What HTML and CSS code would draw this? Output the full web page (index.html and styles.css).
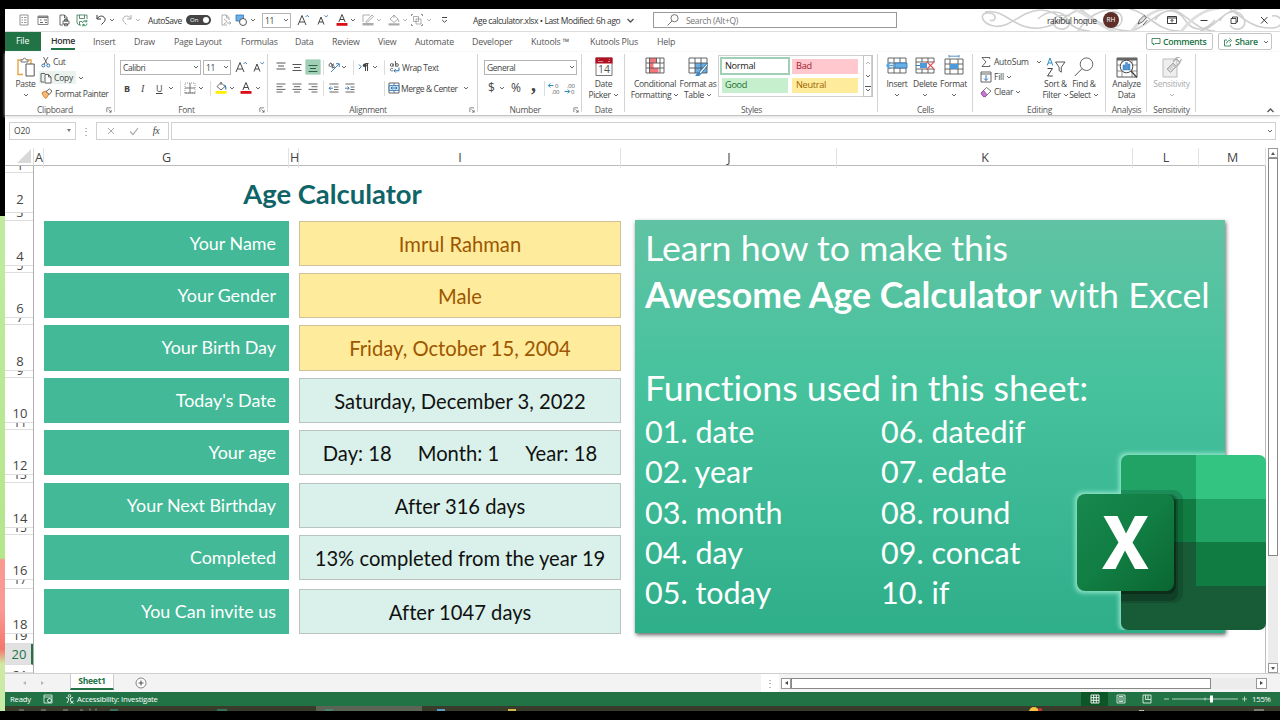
FILE: index.html
```html
<!DOCTYPE html>
<html lang="en">
<head>
<meta charset="utf-8">
<title>Age calculator.xlsx</title>
<link rel="stylesheet" href="styles.css">
</head>
<body>
<svg class="defs" width="0" height="0">
  <symbol id="chev" viewBox="0 0 6 6"><path d="M1 2l2 2 2-2" fill="none" stroke="currentColor" stroke-width=".9"/></symbol>
  <symbol id="form" viewBox="0 0 14 14"><path d="M3 2h8v10H3z" fill="#fff" stroke="#777" stroke-width=".8"/><path d="M4.500 4.500h1.500M4.500 7h1.500M4.500 9.500h1.500M7 4.500h2.500M7 7h2.500M7 9.500h2.500" stroke="#777" stroke-width=".8"/></symbol>
  <symbol id="cal" viewBox="0 0 14 14"><path d="M2 3h10v8.500H2z" fill="#fff" stroke="#666" stroke-width=".8"/><path d="M2 4.200h10" stroke="#666" stroke-width="1.400"/><path d="M4 7h1.500M8 7h3M4 9.500h3M9 9.500h2" stroke="#666"/></symbol>
  <symbol id="docprint" viewBox="0 0 14 14"><path d="M3 12V2h4.500l2.500 2.500V7M3 12h3M7.500 2v3h2.500" fill="none" stroke="#444" stroke-width=".8"/><path d="M6 8h6v3H6zM7.500 11h3v1.800h-3zM7.500 6.500h3V8h-3z" fill="#fff" stroke="#444" stroke-width=".8"/></symbol>
  <symbol id="save" viewBox="0 0 14 14"><path d="M2 2h10v4M2 2v8l2 2h2M4.500 2v3.500h5V2M4.500 12V8.500H7" fill="none" stroke="#4c8564" stroke-width=".9"/><path d="M7.500 10a2.300 2.300 0 0 1 4-1.500M12 10.500a2.300 2.300 0 0 1-4 1.500M11.800 6.800v2h-2M7.800 13.400v-2h2" fill="none" stroke="#2a8a50" stroke-width=".9"/></symbol>
  <symbol id="undo" viewBox="0 0 14 14"><path d="M3 2v4h4M3.200 5.600C5 3 8 2.200 10 4.200s1 4-.5 5.300L7.500 11.500" fill="none" stroke="currentColor"/></symbol>
  <symbol id="redo" viewBox="0 0 14 14"><path d="M11 2v4H7M10.800 5.600C9 3 6 2.200 4 4.200s-1 4 .5 5.300l2 2" fill="none" stroke="#aaa"/></symbol>
  <symbol id="pagearrow" viewBox="0 0 14 14"><path d="M3 12V2h4.500l2.500 2.500V7M3 12h5M7.500 2v3h2.500M5 6l3 2.500L5 11" fill="none" stroke="#999" stroke-width=".8"/><path d="M8 10h4M10.500 8.500L12 10l-1.500 1.500" fill="none" stroke="#999" stroke-width=".8"/></symbol>
  <symbol id="shapes" viewBox="0 0 14 14"><path d="M2 2h7.500v6H2z" fill="#6eb1ea" stroke="#2e75b6" stroke-width=".8"/><circle cx="9" cy="9" r="3.500" fill="#fff" stroke="#444" stroke-width=".9"/></symbol>
  <symbol id="grow" viewBox="0 0 14 14"><path d="M2 12L6 2.500 10 12M3.500 9h5" fill="none" stroke="#444"/><path d="M9.500 4l1.700-1.700L13 4" fill="none" stroke="#2e75b6" stroke-width=".9"/></symbol>
  <symbol id="shrink" viewBox="0 0 14 14"><path d="M3 11.500l3-7.500 3 7.500M4 9h4" fill="none" stroke="#444"/><path d="M9.500 2.300L11.200 4 13 2.300" fill="none" stroke="#2e75b6" stroke-width=".9"/></symbol>
  <symbol id="fcolor" viewBox="0 0 14 14"><path d="M3.800 9L7 1.500 10.200 9M5 6.500h4" fill="none" stroke="#444"/><path d="M1.500 10h11v2.800h-11z" fill="#d90f17"/></symbol>
  <symbol id="pengray" viewBox="0 0 14 14"><path d="M2 9V2h7M5 8.500L11 2l1.500 1.500L6.500 9H5z" fill="none" stroke="#999" stroke-width=".8"/><path d="M1.500 10h11v2.500h-11z" fill="#aaa"/></symbol>
  <symbol id="bucketgray" viewBox="0 0 14 14"><path d="M3 6l4-4 4 4-4 3.500zM7 2v3M11 6l1 3" fill="none" stroke="#999" stroke-width=".8"/><path d="M1.500 10.300h11v2.200h-11z" fill="#aaa"/></symbol>
  <symbol id="bucket" viewBox="0 0 14 14"><path d="M3 5.500l4-4 4 4-4 3.500zM7 1v3" fill="#fff" stroke="#444" stroke-width=".8"/><path d="M10.500 4c1.500 1 1.500 3 1.300 4.500" fill="none" stroke="#2e75b6" stroke-width="1.200"/><path d="M1.500 10h11v2.800h-11z" fill="#ffee00"/></symbol>
  <symbol id="groupi" viewBox="0 0 14 14"><path d="M3.500 3.500h5v5h-5zM6 6h5v5H6z" fill="none" stroke="#999" stroke-width=".8"/><path d="M1.500 3V1.500H3M11 1.500h1.500V3M12.500 11v1.500H11M3 12.500H1.500V11" fill="none" stroke="#888" stroke-width=".9"/></symbol>
  <symbol id="custom" viewBox="0 0 14 14"><path d="M5 4.500h5M5.200 7l2.300 2.300L9.800 7" fill="none" stroke="#444"/></symbol>
  <symbol id="mag" viewBox="0 0 14 14"><circle cx="8.500" cy="5.200" r="3.600" fill="none" stroke="#666" stroke-width=".9"/><path d="M6 8l-4.500 4.500" stroke="#666" stroke-width=".9"/></symbol>
  <symbol id="pen" viewBox="0 0 14 14"><path d="M3 11l1.500-4L9 2.500l2.500 2L7.500 9 3 11zM8 12l4.500-5" fill="none" stroke="#444" stroke-width=".8"/></symbol>
  <symbol id="ribbonopt" viewBox="0 0 14 14"><path d="M2.500 3.500h9v7h-9zM2.500 5h9" fill="none" stroke="#222" stroke-width=".9"/><path d="M7 9.500V6.500M5.500 8L7 6.500 8.500 8" fill="none" stroke="#222" stroke-width=".8"/></symbol>
  <symbol id="min" viewBox="0 0 14 14"><path d="M3.500 7.500h7" stroke="#222" stroke-width=".9"/></symbol>
  <symbol id="restore" viewBox="0 0 14 14"><path d="M4 5.500h5v5H4zM5.500 5.500V4H10.500v5H9" fill="none" stroke="#222" stroke-width=".8"/></symbol>
  <symbol id="close" viewBox="0 0 14 14"><path d="M4 4l6.500 6.500M10.500 4L4 10.500" stroke="#222" stroke-width=".9"/></symbol>
  <symbol id="comment" viewBox="0 0 10 10"><path d="M1 1.500h8v5H4L2.500 8V6.500H1z" fill="none" stroke="#217346" stroke-width=".8"/></symbol>
  <symbol id="share" viewBox="0 0 10 10"><path d="M4 3H1.500v6h6V7M3.500 6.500C4 4 5.500 3.500 7 3.500M6.500 1.500l2.200 2-2.200 2" fill="none" stroke="#217346" stroke-width=".8"/></symbol>
  <symbol id="paste" viewBox="0 0 20 20"><path d="M7 17.500H2V3h3M12 3h3v4" fill="none" stroke="#e7a443" stroke-width="1.400"/><path d="M5 5V2.800h2C7 .6 10 .6 10 2.800h2V5z" fill="#fff" stroke="#666" stroke-width=".9"/><path d="M10 7h8.200v12H10z" fill="#fff" stroke="#555"/></symbol>
  <symbol id="cut" viewBox="0 0 10 12"><path d="M2.500 1l4 7.500M7 1L3 8.500" stroke="#555" fill="none" stroke-width=".9"/><circle cx="2.300" cy="9.500" r="1.500" fill="none" stroke="#2e75b6"/><circle cx="7.300" cy="9.500" r="1.500" fill="none" stroke="#2e75b6"/></symbol>
  <symbol id="copy" viewBox="0 0 12 12"><path d="M4 10H1V1.500h4" fill="none" stroke="#555" stroke-width=".9"/><path d="M5 2.500h3.500L11 5v6H5zM8.500 2.500V5H11" fill="#fff" stroke="#555" stroke-width=".9"/></symbol>
  <symbol id="brush" viewBox="0 0 12 12"><path d="M1 4.500l4-1.500 3 3-3 4.500C3 9.500 1.500 7 1 4.500z" fill="#f6ba76" stroke="#d87720" stroke-width=".9"/><path d="M5 3.500l3.500-2.500L11 3 8.300 6.500z" fill="#fff" stroke="#555" stroke-width=".9"/></symbol>
  <symbol id="launch" viewBox="0 0 7 7"><path d="M1 6V1h5M3 3l3 3M6 3.500V6H3.500" fill="none" stroke="#555" stroke-width=".8"/></symbol>
  <symbol id="borders" viewBox="0 0 14 14"><path d="M2 2h10v10H2z" fill="none" stroke="#999" stroke-dasharray="1 1"/><path d="M7 2v10M2 7h10M1.500 12h11" stroke="#777"/></symbol>
  <symbol id="atop" viewBox="0 0 14 14"><path d="M2.500 3h9M4 6h6M2.500 9h9" stroke="#555"/></symbol>
  <symbol id="amid" viewBox="0 0 14 14"><path d="M2.500 4.500h9M4 7.500h6M2.500 10.500h9" stroke="#555"/></symbol>
  <symbol id="abot" viewBox="0 0 14 14"><path d="M4 8.500h6M2.500 11.500h9M2.500 5.500h9" stroke="#31604a"/></symbol>
  <symbol id="aleft" viewBox="0 0 14 14"><path d="M2.500 3h9M2.500 5.700h6M2.500 8.400h9M2.500 11h6" stroke="#555" stroke-width=".9"/></symbol>
  <symbol id="acen" viewBox="0 0 14 14"><path d="M2.500 3h9M4 5.700h6M2.500 8.400h9M4 11h6" stroke="#555" stroke-width=".9"/></symbol>
  <symbol id="aright" viewBox="0 0 14 14"><path d="M2.500 3h9M5.500 5.700h6M2.500 8.400h9M5.500 11h6" stroke="#555" stroke-width=".9"/></symbol>
  <symbol id="orient" viewBox="0 0 14 14"><path d="M4 12l8-8M9 3.700h3.300V7" fill="none" stroke="#2e75b6" stroke-width=".9"/><circle cx="3.500" cy="5" r="1.500" fill="none" stroke="#555" stroke-width=".9"/><path d="M3.500 2.500l3.500 4M6.500 3.500L5 8l3-1" fill="none" stroke="#555" stroke-width=".9"/></symbol>
  <symbol id="para" viewBox="0 0 14 14"><path d="M2 4.500l2.300 2.300L2 9" fill="none" stroke="#2e75b6"/><path d="M8.500 11V3.500h3M10.500 3.500V11" stroke="#444" fill="none"/><circle cx="7.800" cy="5.300" r="1.900" fill="#444"/></symbol>
  <symbol id="wrap" viewBox="0 0 12 12"><path d="M10 6.500v3.300H5M6.700 8L5 9.800l1.700 1.700" fill="none" stroke="#2e75b6"/><path d="M4.200 9.800H2.500a1 1 0 1 1 0-2.300h1.400" fill="none" stroke="#555" stroke-width=".8"/><circle cx="2.700" cy="4" r="1.400" fill="none" stroke="#555" stroke-width=".9"/><path d="M4.200 2.500v3M6.500 0v5.500" stroke="#555" stroke-width=".9"/><circle cx="8" cy="4" r="1.400" fill="none" stroke="#555" stroke-width=".9"/></symbol>
  <symbol id="merge" viewBox="0 0 12 12"><path d="M1 1h10v10H1z" fill="#fff" stroke="#555" stroke-width=".9"/><path d="M1 3.500h10v5H1z" fill="#bfe0f6" stroke="#2e75b6" stroke-width=".8"/><path d="M3 6h6M4.300 4.800L3 6l1.300 1.200M7.700 4.800L9 6 7.700 7.200M6 1v2.500M6 8.500V11" fill="none" stroke="#36638c" stroke-width=".8"/></symbol>
  <symbol id="outd" viewBox="0 0 14 14"><path d="M2.500 3h9M7 6h4.500M7 8.500h4.500M2.500 11h9" stroke="#555" stroke-width=".9"/><path d="M6 7.200H2M3.700 5.500L2 7.200l1.700 1.700" fill="none" stroke="#2e75b6" stroke-width=".9"/></symbol>
  <symbol id="ind" viewBox="0 0 14 14"><path d="M2.500 3h9M7.500 6h4M7.500 8.500h4M2.500 11h9" stroke="#555" stroke-width=".9"/><path d="M2 7.200h4M4.500 5.500l1.700 1.700-1.700 1.700" fill="none" stroke="#2e75b6" stroke-width=".9"/></symbol>
  <symbol id="incd" viewBox="0 0 14 14"><path d="M1.500 4.500h5M3.300 2.500l-2 2 2 2" fill="none" stroke="#2e8bc0"/><text x="8" y="6.500" class="tiny">0</text><text x="4.500" y="13" class="tiny">.00</text></symbol>
  <symbol id="decd" viewBox="0 0 14 14"><path d="M1.500 10.500h5M4.700 8.500l2 2-2 2" fill="none" stroke="#2e8bc0"/><text x="4" y="6.500" class="tiny">.00</text><text x="8" y="13" class="tiny">0</text></symbol>
  <symbol id="date" viewBox="0 0 18 20"><path d="M1 1h16v17.500H1z" fill="#fff" stroke="#777"/><path d="M.5.500h17v6H.5z" fill="#b01020"/><path d="M3 2.500h1M14 2.500h1M3 4.500h5M13 4.500h2" stroke="#fff" stroke-width=".5"/><text x="9" y="16" text-anchor="middle" class="day">14</text></symbol>
  <symbol id="condf" viewBox="0 0 20 18"><path d="M1 1h18v15H1z" fill="#fff"/><path d="M4.500 1h7v5h-7zM4.500 11h9v5h-9z" fill="#f2767c"/><path d="M4.500 6h4v5h-4z" fill="#f2767c"/><path d="M1 1h18v15H1zM1 6h18M1 11h18M4.500 1v15M15 1v15M11.500 1v5" fill="none" stroke="#555" stroke-width=".9"/></symbol>
  <symbol id="ftable" viewBox="0 0 20 19"><path d="M1 1h18v15H1z" fill="#fff"/><path d="M7 6h12v10H7z" fill="#67b0e6"/><path d="M1 1h18v15H1zM1 6h18M1 11h18M7 1v15M13 1v15" fill="none" stroke="#555" stroke-width=".9"/><path d="M19.500 6l-8 9-3 3.500c2 .5 4-.5 4.500-2l7-8.500z" fill="#fff" stroke="#376f9e" stroke-width=".9"/><path d="M11 14.500l-4 4c2.500.5 5 0 6-2z" fill="#3a87c8"/></symbol>
  <symbol id="ins" viewBox="0 0 22 18"><path d="M2 1h18v15H2zM2 6h18M2 11h18M8 1v15M14 1v15" fill="#fff" stroke="#555" stroke-width=".9"/><path d="M9 6h12v5H9z" fill="#67b0e6" stroke="#2e75b6" stroke-width=".8"/><path d="M10 8.500H1M4.500 5L1 8.500 4.500 12" fill="none" stroke="#58a5dd" stroke-width="1.600"/></symbol>
  <symbol id="del" viewBox="0 0 22 18"><path d="M2 1h18v4H2zM2 12h18v4H2zM8 1v4M14 1v4M8 12v4M14 12v4M2 5v7" fill="#fff" stroke="#555" stroke-width=".9"/><path d="M6 6h7v5H6z" fill="#4b9bdc"/><path d="M2 8.500h4" stroke="#2e75b6"/><path d="M12.500 4.500l8 8M20.500 4.500l-8 8" stroke="#e0565b" stroke-width="1.100"/></symbol>
  <symbol id="fmt" viewBox="0 0 22 21"><path d="M2 4h18v15H2zM2 9h18M2 14h18M7 4v15M15 4v15" fill="#fff" stroke="#555" stroke-width=".9"/><path d="M7 9h8v5H7z" fill="#4b9bdc"/><path d="M6 1.200h10M6 0v2.500M16 0v2.500" stroke="#2e75b6" stroke-width=".8"/></symbol>
  <symbol id="sum" viewBox="0 0 12 12"><path d="M9.800 3V1.500H2L6 6l-4 4.500h7.800V9" fill="none" stroke="#555" stroke-width=".9"/></symbol>
  <symbol id="filld" viewBox="0 0 12 12"><path d="M1 1h10v10H1zM1 3h10" fill="#fff" stroke="#555" stroke-width=".9"/><path d="M6 4.200V9.500M4 7.500l2 2 2-2" fill="none" stroke="#2e75b6"/></symbol>
  <symbol id="clear" viewBox="0 0 12 12"><path d="M1 7l5.500-5.500L11 5 5.500 10.500 3.500 10.500z" fill="#fff" stroke="#555" stroke-width=".8"/><path d="M1 7l2.500-2.500L7 8.800 5.300 10.700H3.500z" fill="#c778cf" stroke="#9a3ba8" stroke-width=".8"/></symbol>
  <symbol id="sort" viewBox="0 0 20 20"><path d="M1.200 8.500L4 1l2.800 7.500M2 6h4" fill="none" stroke="#2e8bc0"/><path d="M1.500 11.500h5L1.500 19h5.300" fill="none" stroke="#444"/><path d="M9.500 5h9.500l-3.700 5.200v5l-2.200-1.700v-3.300z" fill="none" stroke="#444" stroke-width=".9"/></symbol>
  <symbol id="find" viewBox="0 0 20 20"><circle cx="12.500" cy="7.200" r="6.300" fill="none" stroke="#555" stroke-width=".9"/><path d="M8 11.700L.8 19" stroke="#555"/></symbol>
  <symbol id="analyze" viewBox="0 0 22 22"><path d="M1 1h20v19H1z" fill="#fff" stroke="#444" stroke-width=".9"/><path d="M1 1h20v2.500H1z" fill="#666"/><path d="M1 8h20M1 14h20M6 3v17M16 3v17" stroke="#777" stroke-width=".8"/><circle cx="10.500" cy="9.500" r="6.300" fill="#fff" stroke="#444"/><path d="M15 14l6 6.500" stroke="#444" stroke-width="1.300"/><path d="M7 8h2v5H7zM9.500 5.500h2V13h-2zM12 7h2v6h-2z" fill="#4b9bdc" stroke="#2e75b6" stroke-width=".5"/></symbol>
  <symbol id="sens" viewBox="0 0 20 21"><path d="M1 2h14v18H1z" fill="#eee" stroke="#bbb"/><path d="M5 12l6-6 3.500 3.500-6 6z" fill="#ccc" stroke="#aaa"/><path d="M11 5l3-3.500 4 4L15 9M14 1l4-1M17.500 5.500L19.500 2" fill="none" stroke="#aaa" stroke-width="1.200"/><path d="M7 12l2 2M8.500 10.500l2 2M10 9l2 2" stroke="#fff" stroke-width=".7"/></symbol>
</svg>

<div class="screen">
  <div class="edge"></div>
  <div class="app">
    <header class="title">
      <svg class="swirl" viewBox="0 0 300 22"><g fill="none" stroke="#cfcfcf" stroke-width="1.600"><path d="M14 17C0 14-1 3 9 4s6 10 1 7M14 17C30 20 40 2 60 1s30 22 50 21M5 3c20-4 30 19 55 16S85 0 110 0M58 10c10-10 25-9 30 1s-10 12-14 5 6-12 16-9M98 22c10-16 25-22 40-22M100 0c14 10 28 22 50 22M124 12c0-12 18-12 18-2s-14 10-14 2M150 0c20 4 25 22 50 22M150 22c20-4 25-22 50-22M175 11c8-12 22-12 30 0s20 12 30 0M190 0c15 2 25 22 45 22M220 22c15-2 22-22 42-22M240 12c6-12 20-12 24-2s-10 14-14 6M250 0c12 8 22 19 40 19s12-14 2-12"/></g><path d="M200 24c12-16 24-24 40-25M150 24c12-16 24-24 40-25M90 -2c16 6 30 20 48 26" fill="none" stroke="#dedede" stroke-width="3"/></svg>
      <svg class="i"><use href="#form"/></svg><svg class="i"><use href="#cal"/></svg><svg class="i"><use href="#docprint"/></svg><svg class="i"><use href="#save"/></svg>
      <svg class="i"><use href="#undo"/></svg><svg class="c"><use href="#chev"/></svg><svg class="i"><use href="#redo"/></svg><svg class="c dim"><use href="#chev"/></svg>
      <span class="autosave">AutoSave</span><span class="toggle">On<i></i></span>
      <svg class="i"><use href="#pagearrow"/></svg><svg class="i"><use href="#shapes"/></svg><svg class="c"><use href="#chev"/></svg>
      <span class="combo size-top">11<svg class="c"><use href="#chev"/></svg></span>
      <svg class="i"><use href="#grow"/></svg><svg class="i"><use href="#shrink"/></svg><svg class="i"><use href="#fcolor"/></svg><svg class="c"><use href="#chev"/></svg>
      <svg class="i"><use href="#pengray"/></svg><svg class="c dim"><use href="#chev"/></svg><svg class="i"><use href="#bucketgray"/></svg><svg class="c dim"><use href="#chev"/></svg><svg class="i"><use href="#groupi"/></svg><svg class="c dim"><use href="#chev"/></svg><svg class="i"><use href="#custom"/></svg>
      <span class="docname">Age calculator.xlsx • Last Modified: 6h ago</span><svg class="c big"><use href="#chev"/></svg>
      <span class="search"><svg class="i"><use href="#mag"/></svg>Search (Alt+Q)</span>
      <span class="user">rakibul hoque</span><span class="avatar">RH</span>
      <svg class="i"><use href="#pen"/></svg><svg class="i"><use href="#ribbonopt"/></svg><svg class="i"><use href="#min"/></svg><svg class="i"><use href="#restore"/></svg><svg class="i"><use href="#close"/></svg>
    </header>

    <nav class="tabs">
      <b class="file">File</b><b class="on">Home</b><span>Insert</span><span>Draw</span><span>Page Layout</span><span>Formulas</span><span>Data</span><span>Review</span><span>View</span><span>Automate</span><span>Developer</span><span>Kutools ™</span><span>Kutools Plus</span><span>Help</span>
      <span class="btn comments"><svg><use href="#comment"/></svg>Comments</span>
      <span class="btn share"><svg><use href="#share"/></svg>Share<svg class="c"><use href="#chev"/></svg></span>
    </nav>

    <section class="ribbon">
      <div class="group launch">
        <div class="body clip">
          <div class="bigbtn paste"><svg width="20" height="20"><use href="#paste"/></svg><span>Paste</span><svg class="c"><use href="#chev"/></svg></div>
          <div class="stack16">
            <span><svg width="10" height="12"><use href="#cut"/></svg>Cut</span>
            <span class="copy"><i><svg width="12" height="12"><use href="#copy"/></svg>Copy</i><svg class="c"><use href="#chev"/></svg></span>
            <span><svg width="12" height="12"><use href="#brush"/></svg>Format Painter</span>
          </div>
        </div>
        <div class="name">Clipboard<svg><use href="#launch"/></svg></div>
      </div>
      <div class="group launch">
        <div class="body rowed">
          <div class="row font1"><span class="combo">Calibri<svg class="c"><use href="#chev"/></svg></span><span class="combo">11<svg class="c"><use href="#chev"/></svg></span><svg class="i"><use href="#grow"/></svg><svg class="i"><use href="#shrink"/></svg></div>
          <div class="row two font2"><b class="g">B</b><em class="g">I</em><u class="g">U</u><svg class="c"><use href="#chev"/></svg><s></s><svg class="i"><use href="#borders"/></svg><svg class="c"><use href="#chev"/></svg><s></s><svg class="i"><use href="#bucket"/></svg><svg class="c"><use href="#chev"/></svg><svg class="i"><use href="#fcolor"/></svg><svg class="c"><use href="#chev"/></svg></div>
        </div>
        <div class="name">Font<svg><use href="#launch"/></svg></div>
      </div>
      <div class="group launch">
        <div class="body rowed">
          <div class="row al1"><svg class="i"><use href="#atop"/></svg><svg class="i"><use href="#amid"/></svg><svg class="i sel"><use href="#abot"/></svg><s></s><svg class="i"><use href="#orient"/></svg><svg class="c"><use href="#chev"/></svg><s></s><svg class="i"><use href="#para"/></svg><svg class="c"><use href="#chev"/></svg><s></s><svg width="12" height="12"><use href="#wrap"/></svg><span>Wrap Text</span></div>
          <div class="row two al2"><svg class="i"><use href="#aleft"/></svg><svg class="i"><use href="#acen"/></svg><svg class="i"><use href="#aright"/></svg><s></s><svg class="i"><use href="#outd"/></svg><svg class="i"><use href="#ind"/></svg><s></s><svg width="12" height="12"><use href="#merge"/></svg><span>Merge &amp; Center</span><svg class="c"><use href="#chev"/></svg></div>
        </div>
        <div class="name">Alignment<svg><use href="#launch"/></svg></div>
      </div>
      <div class="group launch">
        <div class="body rowed">
          <div class="row num1"><span class="combo">General<svg class="c"><use href="#chev"/></svg></span></div>
          <div class="row two num2"><span class="sym">$</span><svg class="c"><use href="#chev"/></svg><span class="sym">%</span><span class="comma">,</span><s></s><svg class="i"><use href="#incd"/></svg><svg class="i"><use href="#decd"/></svg></div>
        </div>
        <div class="name">Number<svg><use href="#launch"/></svg></div>
      </div>
      <div class="group">
        <div class="body"><div class="bigbtn"><svg width="18" height="20"><use href="#date"/></svg><span>Date</span><span>Picker<svg class="c"><use href="#chev"/></svg></span></div></div>
        <div class="name">Date</div>
      </div>
      <div class="group">
        <div class="body styles">
          <div class="bigbtn"><svg width="20" height="18"><use href="#condf"/></svg><span>Conditional</span><span>Formatting<svg class="c"><use href="#chev"/></svg></span></div>
          <div class="bigbtn"><svg width="20" height="19"><use href="#ftable"/></svg><span>Format as</span><span>Table<svg class="c"><use href="#chev"/></svg></span></div>
          <div class="gallery">
            <span class="normal">Normal</span><span class="bad">Bad</span><span class="good">Good</span><span class="neutral">Neutral</span>
            <div class="spin"><svg class="c up dim"><use href="#chev"/></svg><svg class="c"><use href="#chev"/></svg><span class="more"><svg class="c"><use href="#chev"/></svg></span></div>
          </div>
        </div>
        <div class="name">Styles</div>
      </div>
      <div class="group">
        <div class="body cellsg">
          <div class="bigbtn"><svg width="22" height="18"><use href="#ins"/></svg><span>Insert</span><svg class="c"><use href="#chev"/></svg></div>
          <div class="bigbtn"><svg width="22" height="18"><use href="#del"/></svg><span>Delete</span><svg class="c"><use href="#chev"/></svg></div>
          <div class="bigbtn tall"><svg width="22" height="21"><use href="#fmt"/></svg><span>Format</span><svg class="c"><use href="#chev"/></svg></div>
        </div>
        <div class="name">Cells</div>
      </div>
      <div class="group">
        <div class="body edit">
          <div class="stack15">
            <span><svg width="12" height="12"><use href="#sum"/></svg>AutoSum<svg class="c far"><use href="#chev"/></svg></span>
            <span><svg width="12" height="12"><use href="#filld"/></svg>Fill<svg class="c"><use href="#chev"/></svg></span>
            <span><svg width="12" height="12"><use href="#clear"/></svg>Clear<svg class="c"><use href="#chev"/></svg></span>
          </div>
          <div class="bigbtn"><svg width="20" height="20"><use href="#sort"/></svg><span>Sort &amp;</span><span>Filter<svg class="c"><use href="#chev"/></svg></span></div>
          <div class="bigbtn"><svg width="20" height="20"><use href="#find"/></svg><span>Find &amp;</span><span>Select<svg class="c"><use href="#chev"/></svg></span></div>
        </div>
        <div class="name">Editing</div>
      </div>
      <div class="group">
        <div class="body"><div class="bigbtn"><svg width="22" height="22"><use href="#analyze"/></svg><span>Analyze</span><span>Data</span></div></div>
        <div class="name">Analysis</div>
      </div>
      <div class="group">
        <div class="body"><div class="bigbtn off"><svg width="20" height="21"><use href="#sens"/></svg><span>Sensitivity</span><svg class="c dim"><use href="#chev"/></svg></div></div>
        <div class="name">Sensitivity</div>
      </div>
      <div class="collapse"><svg class="c up big"><use href="#chev"/></svg></div>
    </section>

    <div class="formula">
      <span class="namebox">O20<i></i></span><span class="dots">⋮</span>
      <span class="fx"><svg width="10" height="10"><path d="M2 2l6 6M8 2L2 8" stroke="#aaa"/></svg><svg width="10" height="10"><path d="M1 5.500l3 3L9 2" fill="none" stroke="#aaa" stroke-width="1.200"/></svg><em>fx</em></span>
      <span class="input"><svg class="c"><use href="#chev"/></svg></span>
    </div>

    <main class="work">
      <div class="corner"><svg width="14" height="14"><path d="M14 0v14H0z" fill="#d9d9d9"/></svg></div>
      <div class="cols"><span>A</span><span>G</span><span>H</span><span>I</span><span>J</span><span>K</span><span>L</span><span>M</span></div>
      <div class="vscroll"><span class="sb"><i class="t-up"></i></span><span class="thumb"></span><span class="track"></span><span class="sb"><i class="t-down"></i></span></div>
      <div class="rows"><span class="odd">1</span><span class="r2">2</span><span class="odd">3</span><span>4</span><span class="odd">5</span><span>6</span><span class="odd">7</span><span>8</span><span class="odd">9</span><span>10</span><span class="odd">11</span><span>12</span><span class="odd">13</span><span>14</span><span class="odd">15</span><span>16</span><span class="odd">17</span><span>18</span><span class="odd r19">19</span><span class="cur">20</span><span class="last">21</span></div>
      <div class="sheet">
        <h1>Age Calculator</h1>
        <div class="k r4">Your Name</div><div class="v in r4">Imrul Rahman</div>
        <div class="k r6">Your Gender</div><div class="v in r6">Male</div>
        <div class="k r8">Your Birth Day</div><div class="v in r8">Friday, October 15, 2004</div>
        <div class="k r10">Today's Date</div><div class="v r10">Saturday, December 3, 2022</div>
        <div class="k r12">Your age</div><div class="v age r12"><span>Day: 18</span><span>Month: 1</span><span>Year: 18</span></div>
        <div class="k r14">Your Next Birthday</div><div class="v r14">After 316 days</div>
        <div class="k r16">Completed</div><div class="v r16">13% completed from the year 19</div>
        <div class="k r18">You Can invite us</div><div class="v r18">After 1047 days</div>

        <aside class="panel">
          <p>Learn how to make this</p>
          <p><b>Awesome Age Calculator</b> with Excel</p>
          <p class="gap">Functions used in this sheet:</p>
          <div class="lists">
            <ul><li>01. date</li><li>02. year</li><li>03. month</li><li>04. day</li><li>05. today</li></ul>
            <ul><li>06. datedif</li><li>07. edate</li><li>08. round</li><li>09. concat</li><li>10. if</li></ul>
          </div>
        </aside>
        <svg class="logo" viewBox="0 0 204 190">
          <defs>
            <linearGradient id="lg" x1="0" y1="0" x2="1" y2="1"><stop offset="0" stop-color="#18884f"/><stop offset=".5" stop-color="#117e43"/><stop offset="1" stop-color="#0b6631"/></linearGradient>
            <clipPath id="lc"><rect x="54" y="8" width="145" height="175" rx="7"/></clipPath>
            <clipPath id="pc"><rect x="0" y="0" width="158" height="183"/></clipPath>
            <filter id="gl" x="-20%" y="-20%" width="140%" height="140%"><feGaussianBlur stdDeviation="2.200"/></filter>
          </defs>
          <g clip-path="url(#pc)"><g filter="url(#gl)" fill="#8fe5c8"><rect x="52" y="6" width="140" height="178" rx="7"/><rect x="8" y="45" width="100" height="101" rx="8"/></g></g>
          <g clip-path="url(#lc)">
            <path d="M54 8h75v44H54z" fill="#21a366"/><path d="M129 8h70v44h-70z" fill="#33c481"/>
            <path d="M54 52h75v43H54z" fill="#107c41"/><path d="M129 52h70v43h-70z" fill="#21a366"/>
            <path d="M54 95h75v88H54z" fill="#185c37"/><path d="M129 95h70v44h-70z" fill="#107c41"/><path d="M129 139h70v44h-70z" fill="#185c37"/>
            <rect x="10" y="43" width="106" height="113" rx="9" fill="#000" opacity=".13"/>
            <rect x="10" y="47" width="101" height="107" rx="8" fill="#000" opacity=".18"/>
            <rect x="10" y="48" width="99" height="99" rx="8" fill="#000" opacity=".3"/>
          </g>
          <rect x="10" y="47" width="97" height="97" rx="8" fill="url(#lg)"/>
          <path d="M36.500 69h14l8.500 17.500L68 69h13L65.500 95.500 81.500 122H68L58 103.500 48.500 122H35l16.500-26.500z" fill="#fff"/>
        </svg>
      </div>
    </main>

    <div class="sheetbar">
      <i class="t-left"></i><i class="t-right"></i><b class="stab">Sheet1</b>
      <svg class="plus" width="12" height="12"><circle cx="6" cy="6" r="5" fill="#fff" stroke="#777" stroke-width=".9"/><path d="M3.500 6h5M6 3.500v5" stroke="#555" stroke-width="1.100"/></svg>
      <span class="grip">⋮</span>
      <div class="hscroll"><span class="sb"><i class="t-left dk"></i></span><span class="thumb"></span><span class="track"></span><span class="sb"><i class="t-right dk"></i></span></div>
    </div>

    <footer class="status">
      <span>Ready</span>
      <svg width="10" height="10"><path d="M1 1h8v8H1zM1 3h8" fill="none" stroke="#d5e8dc" stroke-width=".9"/><circle cx="6.500" cy="6.500" r="2" fill="none" stroke="#fff" stroke-width=".9"/></svg>
      <svg width="10" height="10"><circle cx="4.500" cy="1.800" r="1.200" fill="none" stroke="#fff" stroke-width=".8"/><path d="M1 3.500l2.500.8v2L2 9M8 3.500l-2.500.8v2l1 1.700M5.500 7l3 2.500M8.500 7l-3 2.500" fill="none" stroke="#fff" stroke-width=".9"/></svg>
      <span>Accessibility: Investigate</span>
      <span class="view on"><svg width="10" height="10"><path d="M1 1h8v8H1zM1 3.700h8M1 6.300h8M3.700 1v8M6.300 1v8" fill="none" stroke="#fff" stroke-width=".9"/></svg></span>
      <span class="view"><svg width="10" height="10"><path d="M1 1h8v8H1zM3 2.500h4v5H3zM4 4h2M4 6h2" fill="none" stroke="#dcebe2" stroke-width=".9"/></svg></span>
      <span class="view"><svg width="10" height="10"><path d="M1 1h8v8H1zM3.500 1v4.500H9M6 1v4.500" fill="none" stroke="#dcebe2" stroke-width=".9"/></svg></span>
      <svg class="zoomer" width="88" height="10"><path d="M2 5h5M80 5h5M82.500 2.500v5" stroke="#d5e8dc" stroke-width=".8"/><path d="M10 5h66M43 3.500v3" stroke="#d5e8dc" stroke-width=".8"/><path d="M48 1.500h3v7h-3z" fill="#fff"/></svg>
      <span>155%</span>
    </footer>
    <div class="taskbar"><svg width="1275" height="5"><path d="M311 0h106v5H311z" fill="#5c6455"/><path d="M14 4h5M36 4h5M58 4h5M75 4h3M85 2.500v2M91 2.500v2" stroke="#aaa" stroke-width=".8"/><path d="M105 4h8M212 4h10M320 4h8" stroke="#3fa58c"/><path d="M432 4h8" stroke="#5c9ac0" stroke-width="2"/><path d="M503 4h8" stroke="#d6b44c" stroke-width="2"/><circle cx="1029" cy="6" r="5" fill="#f3c53c"/><circle cx="1035" cy="4" r="2" fill="#c33"/><path d="M1134 4.500h5M1249 4h10" stroke="#ddd" stroke-width=".8"/></svg></div>
  </div>
</div>
</body>
</html>
```
FILE: styles.css
```css
* { box-sizing: border-box; }
body { margin: 0; background: #000; font-family: "Open Sans", "Noto Sans", sans-serif; font-size: 8.500px; letter-spacing: -.42px; color: #444; }
.defs { position: absolute; }
svg { display: block; flex: none; }
i { font-style: normal; }
.screen { width: 1280px; height: 720px; overflow: hidden; display: grid; grid-template-columns: 5px 1275px; padding-top: 9px; }
.edge { height: 702px; background: linear-gradient(#000 207px, #c0eb9f 207px, #b4e68c 549px, #f99a90 551px, #fb9a96 600px, #f5766c 640px, #cfe9a4 655px, #c6eba6 702px); }
.app { display: grid; grid-template-rows: 23px 20px 64px 32px 525px 19px 14px 5px; height: 702px; background: #fff; }
.i { width: 14px; height: 14px; }
.c { width: 6px; height: 6px; color: #555; }
.c.dim { color: #aaa; }
.c.big { width: 9px; height: 9px; }
.c.up { transform: rotate(180deg); }
.tiny { font: 6px "Open Sans", sans-serif; fill: #555; letter-spacing: -.3px; }
.day { font: 10.500px "Open Sans", sans-serif; fill: #555; letter-spacing: 0; }

.title { position: relative; display: grid; align-items: center; padding-left: 12px; border-bottom: 1px solid #dcdcdc; white-space: nowrap; color: #333;
  grid-template-columns: 19px 21px 18px 19px 15px 11px 15px 13px 38px 33px 15px 16px 12px 34px 19px 20px 15px 11px 15px 11px 15px 8px 16px 11px 36px 153px 27px 394px 56px 32px 30px 32px 30px 30px 20px; }
.swirl { position: absolute; left: 975px; top: 0; width: 300px; height: 22px; }
.title > :not(.swirl) { position: relative; }
.toggle { width: 25px; height: 10px; border-radius: 5px; background: #444; color: #fff; font-size: 6px; line-height: 10px; padding-left: 4px; letter-spacing: 0; }
.toggle i { position: absolute; right: 2px; top: 2px; width: 6px; height: 6px; border-radius: 3px; background: #fff; }
.combo { display: flex; align-items: center; justify-content: space-between; height: 15px; border: 1px solid #b5b5b5; padding: 0 1px 0 2px; background: #fff; color: #444; }
.size-top { width: 29px; }
.search { display: flex; align-items: center; width: 244px; height: 16px; border: 1px solid #999; padding-left: 12px; gap: 6px; color: #777; background: #fff; letter-spacing: -.3px; }
.avatar { width: 16px; height: 16px; border-radius: 8px; background: #5e2f29; color: #fff; text-align: center; font-size: 6.500px; line-height: 16px; letter-spacing: 0; }

.tabs { display: grid; align-items: center; font-size: 8.800px; letter-spacing: -.2px; white-space: nowrap; color: #555; line-height: 18px;
  grid-template-columns: 46px 42px 41px 40px 67px 54px 37px 46px 37px 57px 59px 59px 67px 489px 72px 53px; }
.file { width: 36px; height: 19px; line-height: 19px; background: #217346; color: #fff; padding-left: 11px; align-self: start; font-weight: 400; }
.on { font-weight: 600; color: #333; }
.tabs .on { justify-self: start; height: 18px; line-height: 19px; border-bottom: 2px solid #217346; align-self: start; letter-spacing: -.35px; }
.btn { display: flex; align-items: center; height: 17px; border: 1px solid #c5c5c5; border-radius: 2px; color: #217346; font-weight: 600; padding-left: 4px; gap: 2px; background: #fff; align-self: start; margin-top: 1px; letter-spacing: -.35px; }
.btn svg { width: 10px; height: 10px; }
.comments { width: 67px; }
.share { width: 54px; }
.btn .c { width: 6px; height: 6px; margin-left: auto; margin-right: 2px; }

.ribbon { display: grid; grid-template-columns: 110px 153px 210px 104px 43px 253px 95px 133px 41px 49px 84px; border-bottom: 1px solid #c4c4c4; box-shadow: 0 1px 3px #ddd; white-space: nowrap; }
.group { position: relative; }
.group::after { content: ""; position: absolute; right: 0; top: 2px; bottom: 3px; width: 1px; background: #d4d4d4; }
.body { height: 51px; }
.rowed { padding-top: 4px; }
.name { line-height: 10px; margin-top: 2px; text-align: center; color: #555; letter-spacing: -.3px; }
.launch .name { padding-right: 10px; }
.name svg { position: absolute; right: 3px; top: 55px; width: 6px; height: 6px; }
.bigbtn { display: flex; flex-direction: column; align-items: center; padding-top: 4px; line-height: 10.500px; letter-spacing: -.3px; height: 48px; }
.bigbtn > svg:first-child { margin: 1px 0 auto; }
.bigbtn > span { display: flex; align-items: center; gap: 2px; height: 10.500px; }
.bigbtn > .c { margin: 2px 0 2.500px; }
.tall { padding-top: 2px; }
.off { color: #aaa; }
.clip { display: grid; grid-template-columns: 35px 75px; }
.paste { padding-left: 6px; }
.stack16 { padding-top: 1.500px; }
.stack16 > span { display: flex; align-items: center; height: 16px; gap: 2px; padding-left: 1px; }
.stack16 > .copy { padding: 0; gap: 0; margin-left: -1px; }
.copy i { display: flex; align-items: center; gap: 2px; width: 37px; height: 13px; background: #eaf3ee; padding-left: 1px; margin-right: 2px; letter-spacing: -.2px; }
.row { display: grid; align-items: center; height: 22px; }
.row.two { height: 20px; }
.row s { width: 1px; height: 15px; background: #ddd; }
.g { font-size: 9px; letter-spacing: 0; }
em.g { font-family: "Liberation Serif", serif; font-size: 10px; }
.font1 { padding-left: 5px; grid-template-columns: 83px 31px 17px 20px; }
.font1 .combo:first-child { width: 81px; }
.font1 .combo:nth-child(2) { width: 28px; }
.font2 { padding-left: 9px; grid-template-columns: 17px 15px 12px 12px 3px 15px 12px 4px 15px 10px 16px 6px; }
.al1 { padding-left: 6px; grid-template-columns: 16px 16px 17px 4px 14px 12px 4px 15px 12px 5px 13px 40px; }
.al2 { padding-left: 6px; grid-template-columns: 16px 16px 17px 4px 16px 41px 4px 13px 62px 6px; }
.sel { background: #9fd0b6; box-shadow: 0 0 0 .5px #86bf9f; }
.num1 { padding-left: 6px; grid-template-columns: 93px; }
.num2 { padding-left: 10px; grid-template-columns: 11px 12px 20px 13px 3px 16px 14px; }
.sym { font-size: 12px; line-height: 12px; letter-spacing: 0; }
.comma { font: 700 20px/10px "Liberation Serif", serif; height: 18px; }
.styles { display: grid; grid-template-columns: 48px 42px 153px; }
.styles .bigbtn { width: 60px; }
.styles .bigbtn:nth-child(2) { width: 50px; }
.gallery { display: grid; grid-template-columns: 70px 66px 11px; grid-template-rows: 18px 16px; gap: 2px; width: 154px; height: 42px; margin: 3px 0 0 3px; border: 1px solid #d0d0d0; padding: 1px 0 0 1px; font-size: 9.200px; letter-spacing: -.3px; }
.gallery > span { padding-left: 4px; line-height: 14px; height: 15px; align-self: center; }
.gallery .normal { border: 2px solid #9fd0b6; height: 18px; line-height: 13px; color: #222; padding-left: 3px; }
.gallery .bad { background: #ffc7ce; color: #a3202c; }
.gallery .good { background: #c6efce; color: #1d6b27; margin: 0 2px; padding-left: 3px; }
.gallery .neutral { background: #ffeb9c; color: #9c6500; }
.spin { grid-column: 3; grid-row: 1 / 3; display: grid; grid-template-rows: 1fr 1fr 1fr; height: 42px; margin: -2px 0 0 3px; width: 10px; border: 1px solid #c4c4c4; justify-items: center; align-items: center; }
.spin > * + * { border-top: 0; }
.spin .more { border-top: 1px solid #555; }
.cellsg { display: grid; grid-template-columns: 33px 28px 29px; }
.cellsg .bigbtn:first-child { padding-left: 5px; }
.edit { display: grid; grid-template-columns: 66px 31px 26px; padding-left: 1px; }
.stack15 { padding: 2px 0 0 6px; }
.stack15 > span { display: flex; align-items: center; height: 15px; gap: 2px; letter-spacing: -.25px; }
.far { margin-left: 5px; }
.collapse { padding: 54px 0 0 70px; }

.formula { display: grid; grid-template-columns: 67px 20px 73px 1107px; align-items: center; padding-left: 4px; margin-top: -2px; margin-bottom: 1px; }
.formula > span { height: 18px; border: 1px solid #d0d0d0; display: flex; align-items: center; }
.namebox { padding: 0 4px; justify-content: space-between; letter-spacing: -.1px; }
.namebox i { border: 2.500px solid transparent; border-top: 3px solid #777; border-bottom: 0; }
.formula > .dots { border: 0; justify-content: center; color: #888; font-size: 10px; }
.formula > .input { justify-content: flex-end; padding-right: 2px; margin-left: 2px; width: 1105px; }
.fx { justify-content: space-around; padding: 0 2px; }
.fx em { font: italic 10px "Liberation Serif", serif; }

.work { display: grid; grid-template: 18px 507px / 29px 1232px 14px; overflow: hidden; letter-spacing: 0; }
.corner { border-right: 1px solid #ddd; border-bottom: 1px solid #bbb; display: flex; justify-content: flex-end; padding: 1px 2px; }
.cols { display: grid; grid-template-columns: 10px 245px 10px 322px 216px 296px 66px 67px; font-size: 12.500px; line-height: 20px; text-align: center; border-bottom: 1px solid #bbb; }
.cols span { border-right: 1px solid #e2e2e2; padding-left: 1px; }
.vscroll { grid-row: 1 / 3; grid-column: 3; display: grid; grid-template-rows: 10px 398px 107px 10px; padding-left: 3px; width: 13px; margin-left: -1px; }
.sb { border: 1px solid #999; display: flex; align-items: center; justify-content: center; background: #fff; }
.thumb { border: 1px solid #888; background: #fff; }
.track { background: #ececec; }
.t-up { border: 2px solid transparent; border-bottom: 3px solid #555; border-top: 0; }
.t-down { border: 2px solid transparent; border-top: 3px solid #555; border-bottom: 0; }
.t-left { border: 2.500px solid transparent; border-right: 3px solid #b5b5b5; border-left: 0; }
.t-right { border: 2.500px solid transparent; border-left: 3px solid #b5b5b5; border-right: 0; }
.t-left.dk { border-right-color: #444; }
.t-right.dk { border-left-color: #444; }
.rows, .sheet { display: grid; grid-template-rows: 7px 40px 8px 45px 7px 45px 7px 46px 7px 45px 7px 45px 8px 45px 7px 45px 9px 45px 10px 21px 8px; }
.rows { border-right: 1px solid #b0b0b0; font-size: 13px; text-align: center; }
.rows span { display: flex; align-items: flex-end; justify-content: center; overflow: hidden; border-bottom: 1px solid #dedede; line-height: 18px; min-height: 0; padding-left: 2px; }
.rows .r2 { padding-bottom: 4px; }
.rows .odd { align-items: flex-start; line-height: 0; font-size: 12px; padding-top: 0; }
.rows .r19 { line-height: 3px; font-size: 13px; }
.rows .cur { background: #e1e1e1; color: #217346; border-right: 2px solid #217346; align-items: center; line-height: 20px; }
.rows .last { align-items: flex-start; line-height: 20px; }

.sheet { position: relative; grid-template-columns: 10px 245px 10px 322px 1fr; border-right: 1px solid #bbb; font-family: Lato, sans-serif; font-variant-ligatures: none; }
h1 { grid-row: 2; grid-column: 2 / 5; margin: 0; text-align: center; font-size: 27.400px; line-height: 42px; color: #0f6467; }
.k { grid-column: 2; background: #43b997; color: #fff; text-align: right; padding-right: 13px; font-size: 17.900px; line-height: 45px; white-space: nowrap; }
.v { grid-column: 4; background: #d9f1ea; border: 1px solid #b9c4c0; color: #111; text-align: center; font-size: 20.200px; line-height: 44px; white-space: nowrap; }
.in { background: #ffeb9c; border-color: #cfc29a; color: #9c5700; }
.age { display: flex; justify-content: center; gap: 26px; }
.r4 { grid-row: 4; } .r6 { grid-row: 6; } .r8 { grid-row: 8; } .r10 { grid-row: 10; } .r12 { grid-row: 12; } .r14 { grid-row: 14; } .r16 { grid-row: 16; } .r18 { grid-row: 18; }
.panel { position: absolute; left: 601px; top: 54px; width: 590px; height: 413px; background: linear-gradient(#60c3a3, #46c29d 40%, #2fae8a); box-shadow: 1px 2px 4px #666; color: #fff; padding: 4px 10px; font-size: 35.700px; white-space: nowrap; }
.panel p { margin: 0; line-height: 47px; }
.panel .gap { margin-top: 46px; }
.lists { display: grid; grid-template-columns: 236px 236px; }
.lists ul { list-style: none; margin: 0; padding: 0; font-size: 30.500px; line-height: 40.300px; }
.logo { position: absolute; left: 1033px; top: 281px; width: 204px; height: 190px; }

.sheetbar { display: grid; grid-template-columns: 18px 29px 44px 647px 18px 1px 486px; align-items: center; background: #f3f3f3; border-top: 1px solid #cfcfcf; padding-left: 18px; }
.sheetbar > i { justify-self: start; }
.stab { align-self: start; height: 16px; line-height: 15px; background: #fff; border: 1px solid #ccc; border-top: 0; border-bottom: 2px solid #217346; color: #217346; text-align: center; font-size: 8.600px; letter-spacing: -.3px; }
.plus { margin-left: 21px; }
.grip { background: #fff; text-align: center; align-self: stretch; line-height: 18px; font-size: 10px; color: #888; }
.hscroll { grid-column: 7; display: grid; grid-template-columns: 10px 420px 45px 11px; height: 11px; margin-left: 1px; }

.status { display: grid; grid-template-columns: 33px 22px 12px 1004px 27px 26px 26px 92px 27px; align-items: center; background: #217346; color: #fff; padding-left: 5px; font-size: 7.700px; letter-spacing: -.2px; white-space: nowrap; }
.zoomer { margin-left: 2px; }
.view { display: flex; justify-content: center; align-items: center; height: 14px; }
.view.on { background: #0e5527; }
.taskbar { background: #393c2b; overflow: hidden; }
```
